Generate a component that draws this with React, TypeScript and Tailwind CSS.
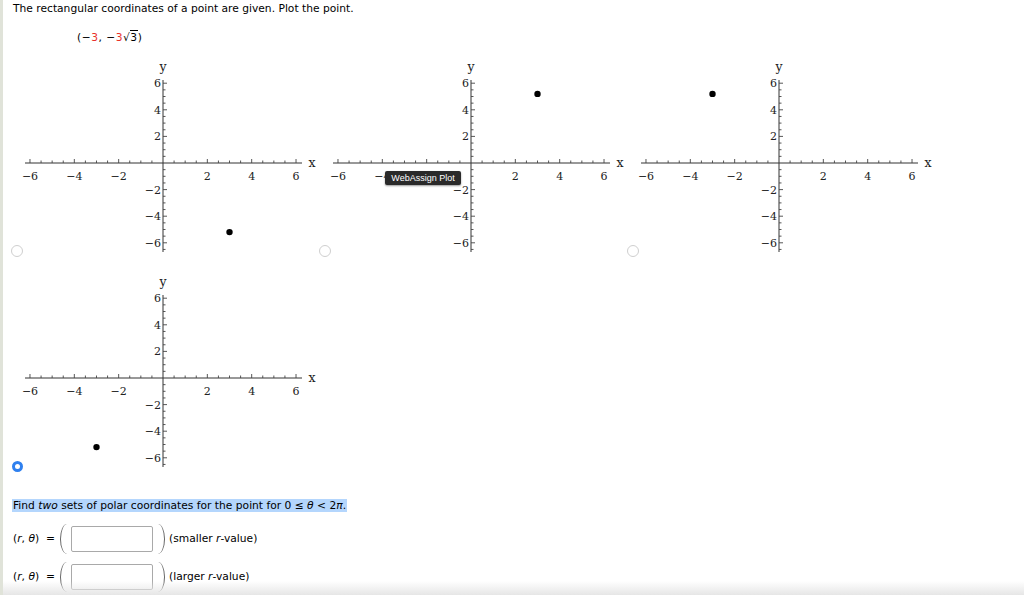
import React from "react";

const UX = 22.17;
const UY = 13.3;
const OX = 139;
const OY = 103;

function Plot({ px, py }: { px: number; py: number }) {
  const xTicks: React.ReactNode[] = [];
  for (let k = -12; k <= 12; k++) {
    if (k === 0) continue;
    const x = OX + k * 0.5 * UX;
    const len = k % 4 === 0 ? 4 : 2.5;
    xTicks.push(<line key={"xt" + k} x1={x} y1={OY} x2={x} y2={OY - len} stroke="#444" strokeWidth={0.9} />);
  }
  const yTicks: React.ReactNode[] = [];
  for (let k = -13; k <= 12; k++) {
    if (k === 0) continue;
    const y = OY - k * 0.5 * UY;
    const len = k % 4 === 0 ? 4 : 2.5;
    yTicks.push(<line key={"yt" + k} x1={OX} y1={y} x2={OX + len} y2={y} stroke="#444" strokeWidth={0.9} />);
  }
  const vals = [-6, -4, -2, 2, 4, 6];
  const lab = (v: number) => (v < 0 ? "\u2212" + Math.abs(v) : String(v));
  return (
    <svg width={294} height={200} viewBox="0 0 294 200" className="block shrink-0 overflow-visible" style={{ fontFamily: '"DejaVu Serif", serif' }}>
      <line x1={1} y1={OY} x2={278} y2={OY} stroke="#333" strokeWidth={1} />
      <line x1={OX} y1={20} x2={OX} y2={192} stroke="#333" strokeWidth={1} />
      {xTicks}
      {yTicks}
      {vals.map((v) => (
        <text key={"xl" + v} x={OX + v * UX} y={OY + 16.5} textAnchor="middle" fontSize={11} fill="#222">
          {lab(v)}
        </text>
      ))}
      {vals.map((v) => (
        <text key={"yl" + v} x={OX - 2} y={OY - v * UY + 4} textAnchor="end" fontSize={11} fill="#222">
          {lab(v)}
        </text>
      ))}
      <text x={OX} y={11} textAnchor="middle" fontSize={12.5} fill="#222">y</text>
      <text x={288} y={107} textAnchor="middle" fontSize={12.5} fill="#222">x</text>
      <circle cx={OX + px * UX} cy={OY - py * UY} r={3.2} fill="#000" />
    </svg>
  );
}

function Radio({ selected }: { selected?: boolean }) {
  return (
    <div className="w-[14px] shrink-0 flex justify-center mb-[3px]">
      {selected ? (
        <div className="w-[11px] h-[11px] rounded-full border-[3px] border-[#2f80ef] bg-white" />
      ) : (
        <div className="w-[12px] h-[12px] rounded-full border border-[#cfcfcf] bg-white" />
      )}
    </div>
  );
}

function Cell({ px, py, selected }: { px: number; py: number; selected?: boolean }) {
  return (
    <div className="flex items-end w-[308px] shrink-0">
      <Radio selected={selected} />
      <Plot px={px} py={py} />
    </div>
  );
}

function Paren({ right }: { right?: boolean }) {
  return right ? (
    <div className="w-[7px] h-[30px] border-r-[1.5px] border-[#666] rounded-[0_100%_100%_0_/_0_50%_50%_0]" />
  ) : (
    <div className="w-[7px] h-[30px] border-l-[1.5px] border-[#666] rounded-[100%_0_0_100%_/_50%_0_0_50%]" />
  );
}

function AnswerRow({ label }: { label: React.ReactNode }) {
  return (
    <div className="flex items-center h-[30px]">
      <span className="w-[47px]">
        (<i>r</i>, <i>θ</i>) &nbsp;=
      </span>
      <Paren />
      <div className="ml-[4px] w-[82px] h-[26px] border border-[#a9a9a9] rounded-[2px] bg-white" />
      <div className="ml-[5px]"><Paren right /></div>
      <span className="ml-[4px]">{label}</span>
    </div>
  );
}

export default function App() {
  const s3 = 3 * Math.sqrt(3);
  return (
    <div
      className="relative w-[1024px] h-[595px] bg-white overflow-hidden border-l-[3px] border-[#e0e3d9] text-[10.7px] text-black"
      style={{ fontFamily: '"DejaVu Sans", Verdana, sans-serif' }}
    >
      <p className="pl-[10px] pt-[2px] leading-[14px]">The rectangular coordinates of a point are given. Plot the point.</p>
      <div className="mt-[15px] pl-[74px] leading-[14px] tracking-[0.5px]">
        (−<span className="text-[#e8302a]">3</span>, −<span className="text-[#e8302a]">3</span>√<span className="border-t border-black">3</span>)
      </div>
      <div className="mt-[15px] pl-[7px] flex">
        <Cell px={3} py={-s3} />
        <Cell px={3} py={s3} />
        <Cell px={-3} py={s3} />
      </div>
      <div className="mt-[15px] pl-[7px] flex">
        <Cell px={-3} py={-s3} selected />
      </div>
      <div className="mt-[24px] pl-[9px] leading-[14px]">
        <span className="bg-[#b4d6fd] px-[1px]">
          Find <i>two</i> sets of polar coordinates for the point for 0 ≤ <i>θ</i> &lt; 2<i>π</i>.
        </span>
      </div>
      <div className="mt-[11px] pl-[10px]">
        <AnswerRow label={<>(smaller <i>r</i>-value)</>} />
      </div>
      <div className="mt-[8px] pl-[10px]">
        <AnswerRow label={<>(larger <i>r</i>-value)</>} />
      </div>
      <div
        className="absolute left-[382px] top-[171px] w-[76px] h-[14px] bg-[#2a2a2a] rounded-[2px] text-white text-[9px] leading-[14px] text-center shadow-[0_1px_2px_rgba(0,0,0,0.4)]"
        style={{ fontFamily: '"Liberation Sans", Arial, sans-serif' }}
      >
        WebAssign Plot
      </div>
      <div className="absolute left-0 right-0 bottom-0 h-[14px] bg-linear-to-b from-transparent to-[#e6e6e6]" />
    </div>
  );
}
